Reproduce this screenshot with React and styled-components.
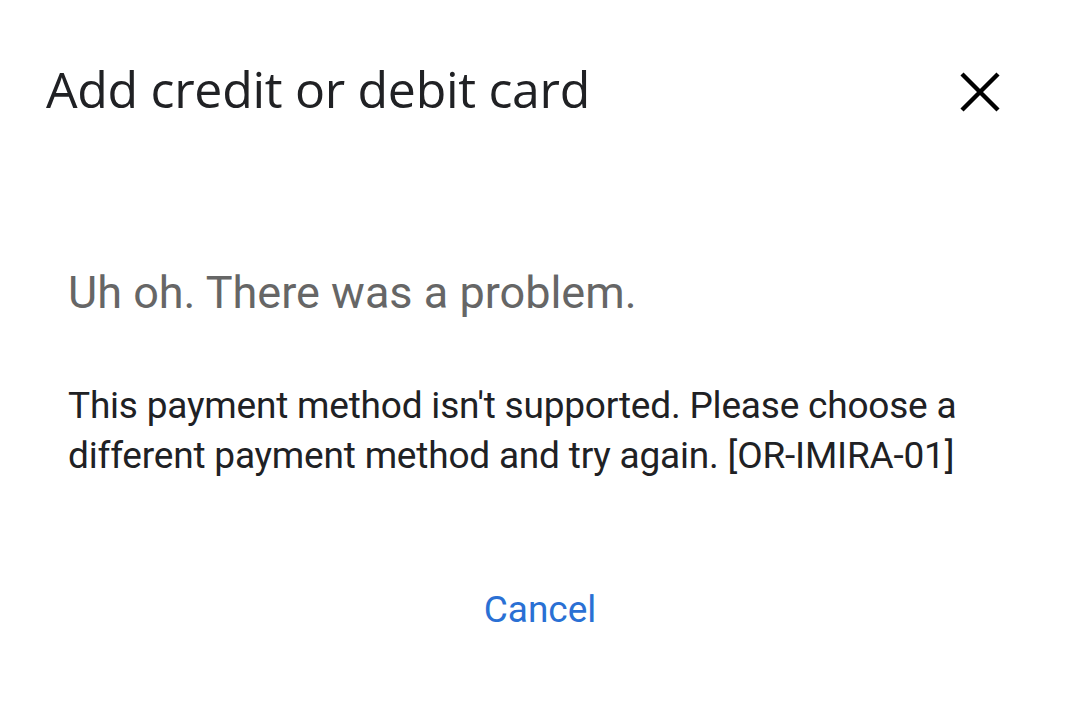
import React from "react";
import styled, { createGlobalStyle } from "styled-components";

const GlobalStyle = createGlobalStyle`
  html, body {
    margin: 0;
    padding: 0;
    background: #ffffff;
  }
`;

const Sheet = styled.div`
  width: 1080px;
  height: 708px;
  background: #ffffff;
  border-top-right-radius: 28px;
  box-sizing: border-box;
  display: flex;
  flex-direction: column;
  font-family: Roboto, "Liberation Sans", sans-serif;
  overflow: hidden;
`;

const Header = styled.div`
  display: flex;
  align-items: center;
  justify-content: space-between;
  padding: 54px 78px 0 46px;
  height: 70px;
`;

const Title = styled.h1`
  margin: 0;
  font-family: "Open Sans", Roboto, sans-serif;
  font-weight: 400;
  font-size: 50px;
  color: #202124;
  letter-spacing: -0.3px;
`;

const CloseButton = styled.button`
  border: none;
  background: none;
  padding: 0;
  margin-top: 6px;
  width: 44px;
  height: 44px;
  display: flex;
  align-items: center;
  justify-content: center;
  cursor: pointer;
`;

const Body = styled.div`
  padding: 141px 68px 0 68px;
`;

const Heading = styled.h2`
  margin: 0;
  font-weight: 400;
  font-size: 45px;
  line-height: 56px;
  color: #666666;
`;

const Message = styled.p`
  margin: 60px 0 0 0;
  font-size: 37px;
  line-height: 50px;
  color: #202124;
  letter-spacing: -0.2px;
`;

const Actions = styled.div`
  display: flex;
  justify-content: center;
  padding-top: 107px;
`;

const TextButton = styled.button`
  border: none;
  background: none;
  padding: 0;
  font-family: Roboto, "Liberation Sans", sans-serif;
  font-size: 37px;
  line-height: 44px;
  color: #2a70d4;
  cursor: pointer;
`;

export default function App() {
  return (
    <>
      <GlobalStyle />
      <Sheet>
        <Header>
          <Title>Add credit or debit card</Title>
          <CloseButton aria-label="Close">
            <svg width="40" height="40" viewBox="0 0 40 40">
              <path
                d="M2 2 L38 38 M38 2 L2 38"
                stroke="#000"
                strokeWidth="4.4"
                fill="none"
              />
            </svg>
          </CloseButton>
        </Header>
        <Body>
          <Heading>Uh oh. There was a problem.</Heading>
          <Message>
            This payment method isn't supported. Please choose a different
            payment method and try again. [OR-IMIRA-01]
          </Message>
        </Body>
        <Actions>
          <TextButton>Cancel</TextButton>
        </Actions>
      </Sheet>
    </>
  );
}
